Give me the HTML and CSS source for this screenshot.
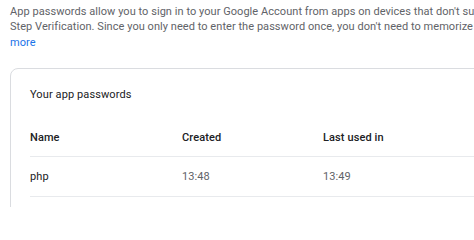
FILE: index.html
```html
<!DOCTYPE html>
<html>
<head>
<meta charset="utf-8">
<link rel="stylesheet" href="styles.css">
</head>
<body>
<div class="page">
  <p class="intro">App passwords allow you to sign in to your Google Account from apps on devices that don't support 2-Step Verification. Since you only need to enter the password once, you don't need to memorize it. <a class="more" href="#">Learn more</a></p>
  <section class="card">
    <h2 class="card-title">Your app passwords</h2>
    <div class="table">
      <div class="row head">
        <div class="c-name">Name</div>
        <div class="c-created">Created</div>
        <div class="c-used">Last used in</div>
      </div>
      <div class="row body-row">
        <div class="c-name name">php</div>
        <div class="c-created muted">13:48</div>
        <div class="c-used muted">13:49</div>
      </div>
    </div>
  </section>
</div>
</body>
</html>
```
FILE: styles.css
```css
html, body {
  margin: 0;
  padding: 0;
  background: #fff;
  overflow: hidden;
}
body {
  font-family: Roboto, "Liberation Sans", Arial, sans-serif;
  width: 474px;
  height: 207px;
}
.page {
  width: 640px;
  padding: 3.5px 0 0 10px;
}
.intro {
  margin: 0;
  width: 525px;
  font-size: 11px;
  line-height: 15.5px;
  color: #5f6368;
  letter-spacing: 0.05px;
}
.more {
  color: #1a73e8;
  text-decoration: none;
}
.card {
  margin-top: 18px;
  border: 1px solid #dadce0;
  border-radius: 8px;
  padding: 18px 0 0 19px;
  height: 200px;
}
.card-title {
  margin: 0;
  font-size: 11px;
  line-height: 16px;
  font-weight: 400;
  color: #202124;
  letter-spacing: 0.1px;
}
.table {
  margin-top: 27px;
}
.row {
  display: grid;
  grid-template-columns: 152px 141px 1fr;
  border-bottom: 1px solid #e8eaed;
  font-size: 11px;
  line-height: 16px;
  color: #202124;
  letter-spacing: 0.1px;
}
.row.head {
  font-weight: 500;
  padding-bottom: 10px;
}
.body-row {
  height: 39px;
  align-items: center;
}
.muted {
  color: #5f6368;
}
```
